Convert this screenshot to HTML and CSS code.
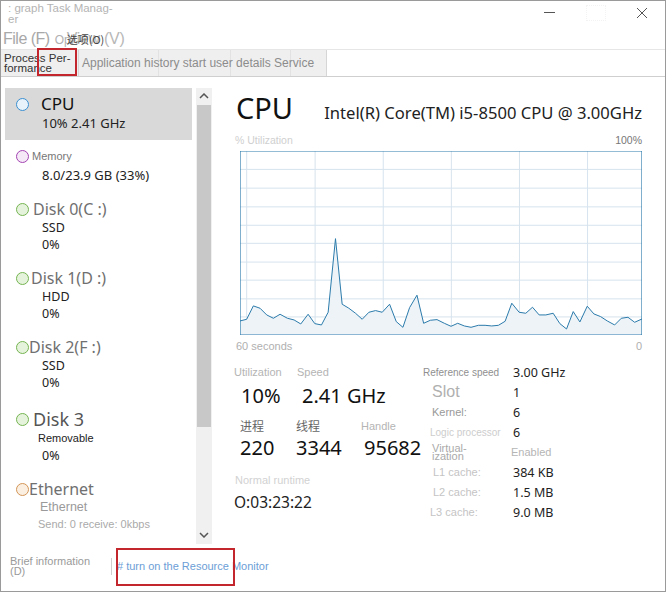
FILE: index.html
```html
<!DOCTYPE html>
<html lang="en">
<head>
    <meta charset="UTF-8">
    <title>Task Manager - Performance</title>
    <link rel="stylesheet" href="styles.css">
</head>
<body>
<div class="window">
    <!-- Title bar -->
    <div class="titlebar">
        <div class="title">: graph Task Manag-<br>er</div>
        <div class="controls">
            <span class="ctl ctl-min"></span>
            <span class="ctl ctl-max"></span>
            <svg class="ctl-close" width="12" height="12" viewBox="0 0 12 12">
                <path d="M1 1 L11 11 M11 1 L1 11" stroke="#555" stroke-width="1" fill="none"/>
            </svg>
        </div>
    </div>

    <!-- Menu -->
    <div class="menubar">
        <span class="menu-file">File (F)</span>
        <span class="menu-op">Op</span>
        <span class="menu-view">View (V)<span class="menu-cn">选项(O)</span></span>
    </div>

    <!-- Tabs -->
    <div class="tabs">
        <div class="tab tab-active">Process Per-<br>formance</div>
        <div class="tab tab-rest">Application history start user details Service</div>
    </div>

    <div class="main">
        <!-- Device list -->
        <div class="sidebar">
            <ul class="devices">
                <li class="dev dev-cpu">
                    <div class="dev-head">
                        <span class="dot dot-blue"></span>
                        <span class="dev-name name-cpu">CPU</span>
                    </div>
                    <div class="dev-sub sub-cpu">10% 2.41 GHz</div>
                </li>
                <li class="dev dev-mem">
                    <div class="dev-head">
                        <span class="dot dot-purple"></span>
                        <span class="dev-name name-mem">Memory</span>
                    </div>
                    <div class="dev-sub sub-mem">8.0/23.9 GB (33%)</div>
                </li>
                <li class="dev dev-disk">
                    <div class="dev-head gap-4">
                        <span class="dot dot-green"></span>
                        <span class="dev-name">Disk 0(C :)</span>
                    </div>
                    <div class="dev-sub">SSD</div>
                    <div class="dev-sub">0%</div>
                </li>
                <li class="dev dev-disk">
                    <div class="dev-head gap-2">
                        <span class="dot dot-green"></span>
                        <span class="dev-name">Disk 1(D :)</span>
                    </div>
                    <div class="dev-sub">HDD</div>
                    <div class="dev-sub">0%</div>
                </li>
                <li class="dev dev-disk">
                    <div class="dev-head gap-0">
                        <span class="dot dot-green"></span>
                        <span class="dev-name">Disk 2(F :)</span>
                    </div>
                    <div class="dev-sub">SSD</div>
                    <div class="dev-sub">0%</div>
                </li>
                <li class="dev dev-disk3">
                    <div class="dev-head gap-4">
                        <span class="dot dot-green"></span>
                        <span class="dev-name name-big">Disk 3</span>
                    </div>
                    <div class="dev-sub sub-small">Removable</div>
                    <div class="dev-sub">0%</div>
                </li>
                <li class="dev dev-eth">
                    <div class="dev-head gap-0">
                        <span class="dot dot-orange"></span>
                        <span class="dev-name">Ethernet</span>
                    </div>
                    <div class="dev-sub sub-eth">Ethernet</div>
                    <div class="dev-sub sub-send">Send: 0 receive: 0kbps</div>
                </li>
            </ul>
            <div class="scrollbar">
                <svg class="arrow" width="10" height="6" viewBox="0 0 10 6"><path d="M1 5 L5 1 L9 5" stroke="#555" stroke-width="1.5" fill="none"/></svg>
                <div class="thumb"></div>
                <div class="track"></div>
                <svg class="arrow" width="10" height="6" viewBox="0 0 10 6"><path d="M1 1 L5 5 L9 1" stroke="#555" stroke-width="1.5" fill="none"/></svg>
            </div>
        </div>

        <!-- CPU details -->
        <div class="detail">
            <div class="cpu-head">
                <span class="cpu-title">CPU</span>
                <span class="cpu-model">Intel(R) Core(TM) i5-8500 CPU @ 3.00GHz</span>
            </div>
            <div class="axis axis-top">
                <span>% Utilization</span>
                <span>100%</span>
            </div>
            <div class="graph">
                <svg width="402" height="184" viewBox="28 35 1204 550" preserveAspectRatio="none">
                    <g stroke="#d6e3ee" stroke-width="1">
                        <path vector-effect="non-scaling-stroke" d="M48 35 V585 M253 35 V585 M457 35 V585 M661 35 V585 M865 35 V585 M1069 35 V585"/>
                        <path vector-effect="non-scaling-stroke" d="M28 90 H1232 M28 146 H1232 M28 202 H1232 M28 257 H1232 M28 311 H1232 M28 367 H1232 M28 421 H1232 M28 477 H1232 M28 531 H1232"/>
                    </g>
                    <polygon fill="#eef3f8" points="28,543 48,538 68,498 88,505 108,525 128,535 148,523 170,535 190,540 210,552 232,523 252,551 272,555 292,517 314,297 334,493 354,505 374,520 394,538 414,517 434,512 454,517 476,493 496,545 516,562 536,503 558,466 578,550 598,541 618,539 640,550 660,559 680,550 700,558 720,562 742,556 762,556 782,558 802,556 822,544 842,490 864,517 884,520 904,502 924,525 944,525 966,520 986,551 1006,567 1026,515 1046,546 1068,499 1088,522 1108,530 1128,543 1150,555 1170,535 1190,532 1210,547 1232,537 1232,585 28,585"/>
                    <polyline fill="none" stroke="#2b7bab" stroke-width="1" vector-effect="non-scaling-stroke" points="28,543 48,538 68,498 88,505 108,525 128,535 148,523 170,535 190,540 210,552 232,523 252,551 272,555 292,517 314,297 334,493 354,505 374,520 394,538 414,517 434,512 454,517 476,493 496,545 516,562 536,503 558,466 578,550 598,541 618,539 640,550 660,559 680,550 700,558 720,562 742,556 762,556 782,558 802,556 822,544 842,490 864,517 884,520 904,502 924,525 944,525 966,520 986,551 1006,567 1026,515 1046,546 1068,499 1088,522 1108,530 1128,543 1150,555 1170,535 1190,532 1210,547 1232,537"/>
                    <rect x="28" y="35" width="1204" height="550" fill="none" stroke="#2b7bab" stroke-width="1.2" vector-effect="non-scaling-stroke"/>
                </svg>
            </div>
            <div class="axis axis-bottom">
                <span>60 seconds</span>
                <span>0</span>
            </div>

            <div class="stats">
                <div class="stats-left">
                    <div class="stat-row">
                        <div class="stat col-util">
                            <div class="stat-label">Utilization</div>
                            <div class="stat-value">10%</div>
                        </div>
                        <div class="stat col-speed">
                            <div class="stat-label">Speed</div>
                            <div class="stat-value">2.41 GHz</div>
                        </div>
                    </div>
                    <div class="stat-row">
                        <div class="stat col-proc">
                            <div class="stat-label label-cn">进程</div>
                            <div class="stat-value">220</div>
                        </div>
                        <div class="stat col-thread">
                            <div class="stat-label label-cn">线程</div>
                            <div class="stat-value">3344</div>
                        </div>
                        <div class="stat col-handle">
                            <div class="stat-label">Handle</div>
                            <div class="stat-value">95682</div>
                        </div>
                    </div>
                    <div class="uptime-label">Normal runtime</div>
                    <div class="uptime">O:03:23:22</div>
                </div>

                <div class="stats-right">
                    <span class="k k-ref">Reference speed</span><span class="v">3.00 GHz</span>
                    <span class="k k-slot">Slot</span><span class="v">1</span>
                    <span class="k k-kernel">Kernel:</span><span class="v">6</span>
                    <span class="k k-logic">Logic processor</span><span class="v">6</span>
                    <span class="k k-virt">Virtual-<br>ization</span><span class="v v-light">Enabled</span>
                    <span class="k k-cache">L1 cache:</span><span class="v">384 KB</span>
                    <span class="k k-cache">L2 cache:</span><span class="v">1.5 MB</span>
                    <span class="k k-cache k-l3">L3 cache:</span><span class="v">9.0 MB</span>
                </div>
            </div>
        </div>
    </div>

    <!-- Footer -->
    <div class="footer">
        <div class="brief">Brief information<br>(D)</div>
        <span class="sep"></span>
        <a class="monitor-link" href="#"># turn on the Resource Monitor</a>
    </div>

    <!-- annotation boxes -->
    <span class="mark mark-tab"></span>
    <span class="mark mark-link"></span>
</div>
</body>
</html>
```

FILE: styles.css
```css
/* General */
body {
    margin: 0;
    padding: 0;
    background-color: #fff;
    font-family: "Noto Sans", "Liberation Sans", sans-serif;
    color: #222;
}

.window {
    position: relative;
    width: 666px;
    height: 592px;
    box-sizing: border-box;
    border: 1px solid #9a9a9a;
    overflow: hidden;
    display: flex;
    flex-direction: column;
}

/* Title bar */
.titlebar {
    height: 27px;
    display: flex;
    justify-content: space-between;
    flex-shrink: 0;
}

.title {
    font-family: "Liberation Sans", sans-serif;
    font-size: 11.5px;
    line-height: 11px;
    color: #b4b4b4;
    padding: 2px 0 0 7px;
}

.controls {
    display: flex;
    align-items: center;
    padding: 0 17px 4px 0;
}

.ctl-min {
    width: 11px;
    height: 1px;
    background-color: #555;
    margin-right: 31px;
}

.ctl-max {
    width: 18px;
    height: 14px;
    border: 1px dotted #f3f3f3;
    margin-right: 30px;
}

/* Menu */
.menubar {
    height: 21px;
    border-bottom: 1px solid #e6e6e6;
    font-family: "Liberation Sans", sans-serif;
    display: flex;
    align-items: baseline;
    padding-left: 2px;
    flex-shrink: 0;
}

.menu-file {
    font-size: 16px;
    letter-spacing: -0.5px;
    color: #a8a8a8;
    line-height: 22px;
}

.menu-op {
    font-size: 12px;
    color: #b0b0b0;
    margin-left: 5px;
}

.menu-view {
    position: relative;
    font-size: 16px;
    letter-spacing: -0.3px;
    color: #b8b8b8;
    margin-left: -4px;
}

.menu-cn {
    position: absolute;
    left: 0;
    top: 3px;
    font-family: "Noto Sans CJK SC", sans-serif;
    font-size: 11px;
    line-height: 12px;
    letter-spacing: 0;
    color: #444;
    white-space: nowrap;
}

/* Tabs */
.tabs {
    height: 26px;
    border-bottom: 1px solid #cfcfcf;
    display: flex;
    font-family: "Liberation Sans", sans-serif;
    flex-shrink: 0;
}

.tab {
    background-color: #efefef;
    border-right: 1px solid #d6d6d6;
}

.tab-active {
    width: 74px;
    font-size: 11.5px;
    line-height: 10px;
    color: #333;
    padding: 3px 0 0 3px;
}

.tab-rest {
    width: 244px;
    font-size: 12px;
    line-height: 26px;
    color: #8c8c8c;
    padding-left: 3px;
    white-space: nowrap;
    background-image: linear-gradient(#e2e2e2, #e2e2e2), linear-gradient(#e2e2e2, #e2e2e2), linear-gradient(#e2e2e2, #e2e2e2);
    background-size: 1px 100%;
    background-position: 79px 0, 151px 0, 211px 0;
    background-repeat: no-repeat;
}

/* Main area */
.main {
    flex: 1;
    display: flex;
    min-height: 0;
}

.sidebar {
    width: 212px;
    display: flex;
    flex-shrink: 0;
    padding-top: 11px;
    box-sizing: border-box;
}

.devices {
    list-style: none;
    margin: 0 0 0 4px;
    padding: 0;
    width: 187px;
}

.dev {
    box-sizing: border-box;
    padding-left: 11px;
}

.dev-head {
    display: flex;
    align-items: center;
    gap: 12px;
}

.gap-0 { gap: 0; }
.gap-2 { gap: 2px; }
.gap-4 { gap: 4px; }

.dot {
    width: 11px;
    height: 11px;
    border-radius: 50%;
    border: 1px solid;
    flex-shrink: 0;
}

.dot-blue { border-color: #3b8fd0; background-color: #e8f2fa; }
.dot-purple { border-color: #a344b3; background-color: #f6e9f7; }
.dot-green { border-color: #74b451; background-color: #e6f3dc; }
.dot-orange { border-color: #d39556; background-color: #fbefe2; }

.dev-name {
    font-size: 16px;
    line-height: 20px;
    color: #707070;
}

.dev-sub {
    font-size: 12.5px;
    line-height: 17px;
    padding-left: 26px;
    color: #222;
}

/* CPU row (selected) */
.dev-cpu {
    height: 52px;
    background-color: #d9d9d9;
    padding-top: 6px;
}

.name-cpu {
    font-size: 17px;
    color: #111;
}

.sub-cpu {
    font-size: 13px;
    line-height: 18px;
}

.dev-mem {
    height: 49px;
    padding-top: 8px;
}

.dev-mem .dev-head {
    gap: 3px;
}

.name-mem {
    font-family: "Liberation Sans", sans-serif;
    font-size: 11px;
    line-height: 16px;
    color: #777;
}

.sub-mem {
    font-size: 13px;
    line-height: 18px;
    margin-top: 2px;
}

.dev-disk {
    height: 69px;
    padding-top: 10px;
}

.dev-disk3 {
    height: 70px;
    padding-top: 12px;
}

.name-big {
    font-size: 18px;
    line-height: 22px;
    color: #555;
}

.sub-small {
    font-family: "Liberation Sans", sans-serif;
    font-size: 11px;
    padding-left: 22px;
}

.dev-eth {
    padding-top: 13px;
}

.sub-eth {
    font-family: "Liberation Sans", sans-serif;
    font-size: 12.5px;
    color: #9a9a9a;
    padding-left: 24px;
}

.sub-send {
    font-family: "Liberation Sans", sans-serif;
    font-size: 11px;
    color: #aaa;
    padding-left: 22px;
}

/* Scrollbar */
.scrollbar {
    width: 16px;
    margin-left: 4px;
    height: 456px;
    background-color: #f0f0f0;
    display: flex;
    flex-direction: column;
    align-items: center;
}

.arrow {
    margin: 5px 0 6px;
    flex-shrink: 0;
}

.thumb {
    width: 14px;
    height: 322px;
    background-color: #c8c8c8;
}

.track {
    flex: 1;
}

/* Detail panel */
.detail {
    flex: 1;
    padding: 4px 25px 0 21px;
}

.cpu-head {
    display: flex;
    align-items: baseline;
    justify-content: space-between;
    height: 47px;
    padding-top: 7px;
    box-sizing: border-box;
}

.cpu-title {
    font-size: 29px;
    line-height: 40px;
    color: #111;
    margin-left: 2px;
}

.cpu-model {
    font-size: 16.6px;
    color: #222;
}

.axis {
    display: flex;
    justify-content: space-between;
    font-family: "Liberation Sans", sans-serif;
    font-size: 10.5px;
    line-height: 12px;
    color: #a5a5a5;
}

.axis-top {
    margin: 6px 0 5px;
}

.axis-top span:first-child {
    color: #cfcfcf;
    margin-left: 1px;
}

.axis-top span:last-child {
    color: #777;
}

.graph {
    height: 184px;
    padding-left: 6px;
}

.graph svg {
    display: block;
}

.axis-bottom {
    margin-top: 5px;
    font-size: 11px;
    color: #b0b0b0;
    padding-left: 2px;
}

/* Stats */
.stats {
    display: flex;
    margin-top: 13px;
}

.stats-left {
    width: 189px;
}

.stat-row {
    display: flex;
}

.stat-label {
    font-family: "Liberation Sans", sans-serif;
    font-size: 11px;
    line-height: 14px;
    color: #b4b4b4;
}

.label-cn {
    font-family: "Noto Sans CJK SC", sans-serif;
    font-size: 12px;
    color: #666;
}

.stat-value {
    font-size: 20px;
    line-height: 26px;
    color: #111;
    margin-top: 4px;
}

.stat-row + .stat-row {
    margin-top: 10px;
}

.stat-row + .stat-row .stat-value {
    margin-top: 2px;
}

.col-util { width: 63px; }
.col-util .stat-value { padding-left: 7px; }
.col-speed .stat-value { padding-left: 5px; }

.col-proc { width: 56px; padding-left: 6px; }
.col-thread { width: 65px; }
.col-handle .stat-value { padding-left: 3px; }

.uptime-label {
    font-family: "Liberation Sans", sans-serif;
    font-size: 11px;
    color: #d2d2d2;
    margin: 12px 0 0 1px;
    line-height: 14px;
}

.uptime {
    font-size: 15.5px;
    line-height: 22px;
    margin-top: 4px;
}

.stats-right {
    display: grid;
    grid-template-columns: 90px auto;
    grid-auto-rows: 20px;
    align-items: center;
    margin-top: -3px;
}

.k {
    font-family: "Liberation Sans", sans-serif;
    font-size: 11px;
    color: #999;
    padding-left: 9px;
}

.k-ref {
    font-size: 10px;
    padding-left: 0;
    color: #8f8f8f;
}

.k-slot {
    font-size: 16px;
    color: #b0b0b0;
}

.k-logic {
    font-size: 10px;
    color: #cdcdcd;
    padding-left: 7px;
}

.k-virt {
    line-height: 8px;
    color: #aaa;
}

.k-cache {
    color: #c4c4c4;
    padding-left: 10px;
}

.k-cache.k-l3 {
    padding-left: 7px;
}

.v {
    font-size: 12.5px;
    color: #222;
}

.v-light {
    font-family: "Liberation Sans", sans-serif;
    font-size: 11px;
    color: #b5b5b5;
    margin-left: -2px;
}

/* Footer */
.footer {
    height: 46px;
    display: flex;
    align-items: center;
    flex-shrink: 0;
    font-family: "Liberation Sans", sans-serif;
    font-size: 11px;
    padding: 0 0 4px 9px;
    box-sizing: border-box;
}

.brief {
    width: 100px;
    line-height: 10px;
    color: #9a9a9a;
}

.sep {
    width: 1px;
    height: 17px;
    background-color: #cfcfcf;
    margin-left: 1px;
}

.monitor-link {
    color: #6c9ed6;
    text-decoration: none;
    margin-left: 5px;
}

/* Red annotation boxes */
.mark {
    position: absolute;
    border: 2px solid #c4262e;
}

.mark-tab {
    left: 36px;
    top: 47px;
    width: 36px;
    height: 24px;
}

.mark-link {
    left: 115px;
    top: 547px;
    width: 115px;
    height: 34px;
}
```
